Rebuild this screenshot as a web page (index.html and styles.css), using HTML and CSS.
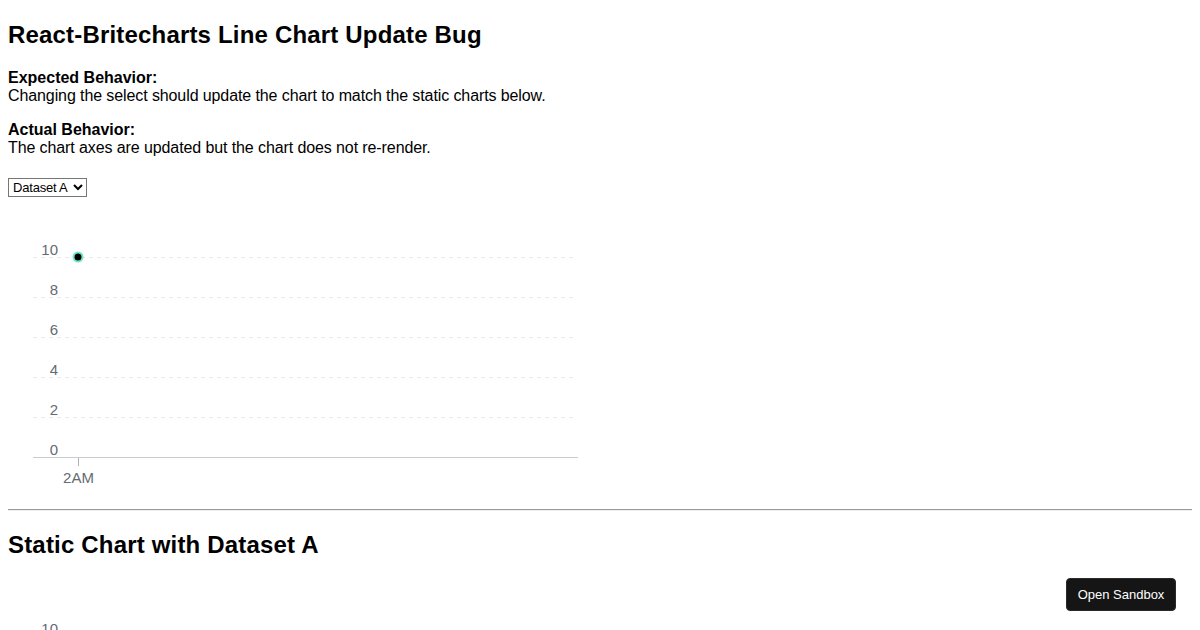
FILE: index.html
```html
<!DOCTYPE html>
<html>
<head>
<meta charset="utf-8">
<link rel="stylesheet" href="styles.css">
</head>
<body>
<div class="app">
  <h2>React-Britecharts Line Chart Update Bug</h2>
  <p><strong>Expected Behavior:</strong><br>Changing the select should update the chart to match the static charts below.</p>
  <p><strong>Actual Behavior:</strong><br>The chart axes are updated but the chart does not re-render.</p>
  <div class="picker">
    <select class="dataset">
      <option>Dataset A</option>
      <option>Dataset B</option>
    </select>
  </div>
  <div class="chart">
    <svg class="line-chart" width="600" height="300" viewBox="0 0 600 300">
      <g class="grid">
        <line x1="25" y1="57.5" x2="565" y2="57.5"/>
        <line x1="25" y1="97.5" x2="565" y2="97.5"/>
        <line x1="25" y1="137.5" x2="565" y2="137.5"/>
        <line x1="25" y1="177.5" x2="565" y2="177.5"/>
        <line x1="25" y1="217.5" x2="565" y2="217.5"/>
      </g>
      <g class="ylabels">
        <text x="50" y="55">10</text>
        <text x="50" y="95">8</text>
        <text x="50" y="135">6</text>
        <text x="50" y="175">4</text>
        <text x="50" y="215">2</text>
        <text x="50" y="255">0</text>
      </g>
      <line class="axis" x1="25" y1="257.5" x2="570" y2="257.5"/>
      <line class="tick" x1="70.5" y1="258" x2="70.5" y2="266"/>
      <text class="xlabel" x="70.5" y="283">2AM</text>
      <circle class="dot" cx="70" cy="57" r="4.5"/>
    </svg>
  </div>
  <hr>
  <h2>Static Chart with Dataset A</h2>
  <div class="chart">
    <svg class="line-chart" width="600" height="300" viewBox="0 0 600 300">
      <g class="grid">
        <line x1="25" y1="57.5" x2="565" y2="57.5"/>
        <line x1="25" y1="97.5" x2="565" y2="97.5"/>
        <line x1="25" y1="137.5" x2="565" y2="137.5"/>
        <line x1="25" y1="177.5" x2="565" y2="177.5"/>
        <line x1="25" y1="217.5" x2="565" y2="217.5"/>
      </g>
      <g class="ylabels">
        <text x="50" y="55">10</text>
        <text x="50" y="95">8</text>
        <text x="50" y="135">6</text>
        <text x="50" y="175">4</text>
        <text x="50" y="215">2</text>
        <text x="50" y="255">0</text>
      </g>
      <line class="axis" x1="25" y1="257.5" x2="570" y2="257.5"/>
    </svg>
  </div>
</div>
<a class="sandbox-btn" href="#">Open Sandbox</a>
</body>
</html>
```
FILE: styles.css
```css
html, body {
  margin: 0;
  padding: 0;
}
body {
  font-family: "Liberation Sans", Arial, sans-serif;
  font-size: 16px;
  color: #000;
  background: #fff;
}
.app {
  padding: 1px 8px 8px;
}
h2 {
  font-size: 24px;
  font-weight: bold;
  margin: 19.92px 0;
  letter-spacing: 0.18px;
}
p {
  margin: 16px 0;
  letter-spacing: -0.1px;
}
p strong {
  letter-spacing: 0;
}
.picker {
  padding-top: 5px;
  height: 22px;
}
.dataset {
  font-family: "Liberation Sans", Arial, sans-serif;
  font-size: 13px;
  letter-spacing: -0.2px;
  width: 79px;
  height: 19px;
  padding: 0;
  border: 1px solid #767676;
  border-radius: 0;
  background: #fff;
  color: #000;
}
.chart {
  height: 301px;
}
.line-chart {
  display: block;
}
.grid line {
  stroke: #ececec;
  stroke-width: 1;
  stroke-dasharray: 4 4;
}
.ylabels text {
  font-family: "Liberation Sans", Arial, sans-serif;
  font-size: 15px;
  fill: #666a73;
  text-anchor: end;
}
.xlabel {
  font-family: "Liberation Sans", Arial, sans-serif;
  font-size: 15px;
  fill: #666a73;
  text-anchor: middle;
}
.axis {
  stroke: #c8cbd2;
  stroke-width: 1;
}
.tick {
  stroke: #adb0b6;
  stroke-width: 1;
}
.dot {
  fill: #000;
  stroke: #6ee6c8;
  stroke-width: 2;
}
hr {
  margin: 8px 0;
  border: 0;
  border-top: 1px solid #9a9a9a;
  border-bottom: 1px solid #eeeeee;
  height: 0;
}
.sandbox-btn {
  position: fixed;
  right: 24px;
  bottom: 19px;
  width: 110px;
  height: 33px;
  box-sizing: border-box;
  display: flex;
  align-items: center;
  justify-content: center;
  background: #151515;
  color: #fff;
  border-radius: 4px;
  border: 1px solid #2a2a2a;
  font-family: "Liberation Sans", Arial, sans-serif;
  font-size: 13px;
  text-decoration: none;
}
```
